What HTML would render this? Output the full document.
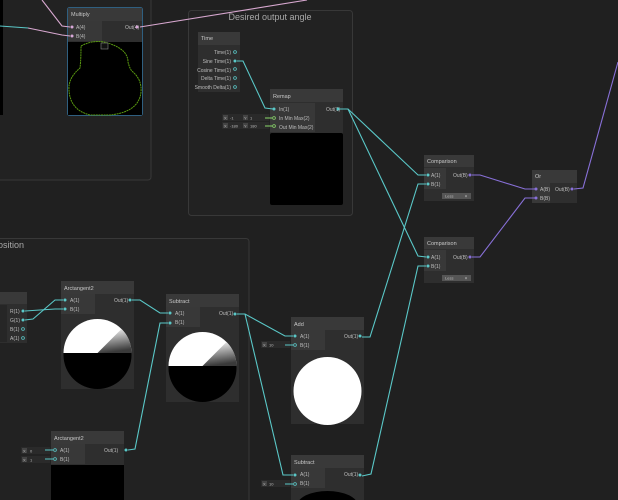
<!DOCTYPE html>
<html><head><meta charset="utf-8"><style>
html,body{margin:0;padding:0;background:#202020;width:618px;height:500px;overflow:hidden}
svg{display:block}
text{font-family:"Liberation Sans",sans-serif;font-size:5px;fill:#bdbdbd}
.h{font-size:5.5px;fill:#c8c8c8}
</style></head><body>
<svg width="618" height="500" viewBox="0 0 618 500" xmlns="http://www.w3.org/2000/svg">
<defs>
<linearGradient id="g1" x1="0" y1="0" x2="0.2" y2="1"><stop offset="0" stop-color="#fff"/><stop offset="1" stop-color="#3a3a3a"/></linearGradient>
</defs>
<rect width="618" height="500" fill="#202020"/>
<!-- groups -->
<rect x="-5" y="-5" width="156" height="185" rx="3" fill="#222" stroke="#383838"/>
<rect x="188.5" y="10.5" width="164" height="205" rx="3" fill="#222" stroke="#383838"/>
<text x="270" y="20" text-anchor="middle" style="font-size:9px;fill:#a8a8a8">Desired output angle</text>
<rect x="-5" y="238.5" width="254" height="270" rx="3" fill="#222" stroke="#383838"/>
<text x="-2" y="248" style="font-size:9px;fill:#a8a8a8">osition</text>

<!-- left strip -->
<rect x="0" y="0" width="3" height="115" fill="#000"/>

<!-- Multiply -->
<rect x="67.5" y="7.5" width="75" height="108" rx="2" fill="#2e2e2e" stroke="#2f5f80"/>
<rect x="68" y="8" width="74" height="13" fill="#393939"/>
<text x="71" y="16" class="h">Multiply</text>
<rect x="68" y="21" width="34" height="20" fill="#383838"/>
<text x="76" y="29">A(4)</text><text x="76" y="38">B(4)</text>
<text x="125" y="29">Out(4)</text>
<circle cx="72" cy="27" r="1.5" fill="#d8a8d8"/><circle cx="72" cy="36" r="1.5" fill="#d8a8d8"/><circle cx="137" cy="27" r="1.5" fill="#d8a8d8"/>
<rect x="68" y="42" width="74" height="73" fill="#000"/>
<path d="M81 46 Q92 40 104 42 Q128 48 128 62 Q130 70 133 72 Q142 80 141 92 Q139 112 110 115 L90 115 Q70 110 69 90 Q68 78 80 68 Q81 60 81 46Z" fill="none" stroke="#5a9a10" stroke-width="1" stroke-dasharray="2 0.6"/>
<rect x="101" y="43" width="7" height="6" fill="#111" stroke="#888" stroke-width="0.6"/>

<!-- Time -->
<rect x="198" y="32" width="42" height="60" fill="#2e2e2e"/>
<rect x="198" y="32" width="42" height="13" fill="#393939"/>
<text x="201" y="40" class="h">Time</text>
<g text-anchor="end"><text x="231" y="54">Time(1)</text><text x="231" y="63">Sine Time(1)</text><text x="231" y="72">Cosine Time(1)</text><text x="231" y="80">Delta Time(1)</text><text x="231" y="89">Smooth Delta(1)</text></g>
<g fill="none" stroke="#5ac8c8" stroke-width="0.8"><circle cx="235" cy="52" r="1.4"/><circle cx="235" cy="69" r="1.4"/><circle cx="235" cy="78" r="1.4"/><circle cx="235" cy="87" r="1.4"/></g>
<circle cx="235" cy="61" r="1.5" fill="#5ac8c8"/>

<!-- Remap -->
<rect x="270" y="89" width="73" height="116" rx="2" fill="#2e2e2e"/>
<rect x="270" y="89" width="73" height="13" fill="#393939"/>
<text x="273" y="98" class="h">Remap</text>
<rect x="270" y="103" width="45" height="29" fill="#383838"/>
<text x="279" y="111">In(1)</text><text x="279" y="120">In Min Max(2)</text><text x="279" y="129">Out Min Max(2)</text>
<text x="326" y="111">Out(1)</text>
<circle cx="274" cy="109" r="1.5" fill="#5ac8c8"/><circle cx="338" cy="109" r="1.5" fill="#5ac8c8"/>
<g fill="none" stroke="#8ad86a" stroke-width="0.8"><circle cx="274" cy="118" r="1.4"/><circle cx="274" cy="126" r="1.4"/></g>
<rect x="270" y="133" width="73" height="72" rx="2" fill="#000"/>
<g fill="#2a2a2a"><rect x="222" y="114" width="47" height="7"/><rect x="222" y="122" width="47" height="7"/></g>
<g fill="#444"><rect x="223" y="115" width="5" height="5"/><rect x="243" y="115" width="5" height="5"/><rect x="223" y="123" width="5" height="5"/><rect x="243" y="123" width="5" height="5"/></g>
<text x="224" y="119.5" style="font-size:4px">X</text><text x="230" y="119.5" style="font-size:4px">-1</text><text x="244" y="119.5" style="font-size:4px">Y</text><text x="250" y="119.5" style="font-size:4px">1</text>
<text x="224" y="127.5" style="font-size:4px">X</text><text x="230" y="127.5" style="font-size:4px">-180</text><text x="244" y="127.5" style="font-size:4px">Y</text><text x="250" y="127.5" style="font-size:4px">180</text>
<line x1="265" y1="118" x2="272" y2="118" stroke="#8ad86a"/><line x1="265" y1="126" x2="272" y2="126" stroke="#8ad86a"/>

<!-- Comparisons -->
<g id="c1">
<rect x="424" y="155" width="50" height="46" fill="#2e2e2e"/>
<rect x="424" y="155" width="50" height="12" fill="#393939"/>
<text x="427" y="163" class="h">Comparison</text>
<rect x="424" y="168" width="22" height="21" fill="#383838"/>
<text x="431" y="177">A(1)</text><text x="431" y="186">B(1)</text><text x="453" y="177">Out(B)</text>
<circle cx="428" cy="175" r="1.5" fill="#5ac8c8"/><circle cx="428" cy="184" r="1.5" fill="#5ac8c8"/><circle cx="470" cy="175" r="1.5" fill="#8870d8"/>
<rect x="442" y="193" width="29" height="6" fill="#555"/><text x="445" y="197.5" style="font-size:4px">Less</text><text x="465" y="197.5" style="font-size:4px">▾</text>
</g>
<use href="#c1" y="82"/>
<!-- Or -->
<rect x="532" y="170" width="45" height="33" fill="#2e2e2e"/>
<rect x="532" y="170" width="45" height="13" fill="#393939"/>
<text x="535" y="178" class="h">Or</text>
<rect x="532" y="183" width="18" height="20" fill="#383838"/>
<text x="540" y="191">A(B)</text><text x="540" y="200">B(B)</text><text x="555" y="191">Out(B)</text>
<circle cx="536" cy="189" r="1.5" fill="#8870d8"/><circle cx="536" cy="198" r="1.5" fill="#8870d8"/><circle cx="572" cy="189" r="1.5" fill="#8870d8"/>

<!-- Split-ish -->
<rect x="-2" y="292" width="29" height="51" fill="#2e2e2e"/>
<rect x="-2" y="292" width="29" height="12" fill="#393939"/>
<rect x="-2" y="305" width="9" height="37" fill="#262626"/>
<text x="10" y="313">R(1)</text><text x="10" y="322">G(1)</text><text x="10" y="331">B(1)</text><text x="10" y="340">A(1)</text>
<circle cx="23" cy="311" r="1.5" fill="#5ac8c8"/><circle cx="23" cy="320" r="1.5" fill="#5ac8c8"/>
<g fill="none" stroke="#5ac8c8" stroke-width="0.8"><circle cx="23" cy="329" r="1.4"/><circle cx="23" cy="338" r="1.4"/></g>

<!-- Arctan2 #1 -->
<rect x="61" y="281" width="73" height="108" fill="#2e2e2e"/>
<rect x="61" y="281" width="73" height="13" fill="#393939"/>
<text x="64" y="290" class="h">Arctangent2</text>
<rect x="61" y="294" width="34" height="20" fill="#383838"/>
<text x="70" y="302">A(1)</text><text x="70" y="311">B(1)</text><text x="114" y="302">Out(1)</text>
<circle cx="65" cy="300" r="1.5" fill="#5ac8c8"/><circle cx="65" cy="309" r="1.5" fill="#5ac8c8"/><circle cx="130" cy="300" r="1.5" fill="#5ac8c8"/>
<circle cx="97.5" cy="355" r="34" fill="#000"/>
<path d="M63.5 353 A34 34 0 0 1 131.5 353 Z" fill="#fff"/>
<path d="M97.5 353 L121.5 329 A34 34 0 0 1 131.5 353 Z" fill="url(#g1)"/>

<!-- Subtract -->
<rect x="166" y="294" width="73" height="108" fill="#2e2e2e"/>
<rect x="166" y="294" width="73" height="13" fill="#393939"/>
<text x="169" y="303" class="h">Subtract</text>
<rect x="166" y="307" width="34" height="20" fill="#383838"/>
<text x="175" y="315">A(1)</text><text x="175" y="324">B(1)</text><text x="219" y="315">Out(1)</text>
<circle cx="170" cy="313" r="1.5" fill="#5ac8c8"/><circle cx="170" cy="323" r="1.5" fill="#5ac8c8"/><circle cx="235" cy="314" r="1.5" fill="#5ac8c8"/>
<circle cx="202.5" cy="368" r="34" fill="#000"/>
<path d="M168.5 366 A34 34 0 0 1 236.5 366 Z" fill="#fff"/>
<path d="M202.5 366 L226.5 342 A34 34 0 0 1 236.5 366 Z" fill="url(#g1)"/>

<!-- Add -->
<rect x="291" y="317" width="73" height="107" fill="#2e2e2e"/>
<rect x="291" y="317" width="73" height="13" fill="#393939"/>
<text x="294" y="326" class="h">Add</text>
<rect x="291" y="330" width="34" height="20" fill="#383838"/>
<text x="300" y="338">A(1)</text><text x="300" y="347">B(1)</text><text x="344" y="338">Out(1)</text>
<circle cx="295" cy="336" r="1.5" fill="#5ac8c8"/><circle cx="360" cy="336" r="1.5" fill="#5ac8c8"/>
<circle cx="295" cy="345" r="1.4" fill="none" stroke="#5ac8c8" stroke-width="0.8"/>
<circle cx="327.5" cy="391" r="34" fill="#fff"/>
<rect x="261" y="341" width="29" height="7" fill="#2a2a2a"/><rect x="262" y="342" width="5" height="5" fill="#444"/>
<text x="263" y="346.5" style="font-size:4px">X</text><text x="269" y="346.5" style="font-size:4px">10</text>
<line x1="285" y1="345" x2="293" y2="345" stroke="#5ac8c8"/>

<!-- Subtract 2 -->
<rect x="291" y="455" width="73" height="50" fill="#2e2e2e"/>
<rect x="291" y="455" width="73" height="13" fill="#393939"/>
<text x="294" y="464" class="h">Subtract</text>
<rect x="291" y="468" width="34" height="20" fill="#383838"/>
<text x="300" y="476">A(1)</text><text x="300" y="485">B(1)</text><text x="344" y="476">Out(1)</text>
<circle cx="295" cy="475" r="1.5" fill="#5ac8c8"/><circle cx="360" cy="475" r="1.5" fill="#5ac8c8"/>
<circle cx="295" cy="484" r="1.4" fill="none" stroke="#5ac8c8" stroke-width="0.8"/>
<rect x="291" y="489" width="73" height="11" fill="#2e2e2e"/>
<ellipse cx="327.5" cy="505" rx="30" ry="14" fill="#000"/>
<rect x="261" y="480" width="29" height="7" fill="#2a2a2a"/><rect x="262" y="481" width="5" height="5" fill="#444"/>
<text x="263" y="485.5" style="font-size:4px">X</text><text x="269" y="485.5" style="font-size:4px">10</text>
<line x1="285" y1="484" x2="293" y2="484" stroke="#5ac8c8"/>

<!-- Arctan2 #2 -->
<rect x="51" y="431" width="73" height="70" fill="#2e2e2e"/>
<rect x="51" y="431" width="73" height="13" fill="#393939"/>
<text x="54" y="440" class="h">Arctangent2</text>
<rect x="51" y="444" width="34" height="20" fill="#383838"/>
<text x="60" y="452">A(1)</text><text x="60" y="461">B(1)</text><text x="104" y="452">Out(1)</text>
<circle cx="126" cy="450" r="1.5" fill="#5ac8c8"/>
<g fill="none" stroke="#5ac8c8" stroke-width="0.8"><circle cx="55" cy="450" r="1.4"/><circle cx="55" cy="459" r="1.4"/></g>
<rect x="51" y="465" width="73" height="36" fill="#000"/>
<g fill="#2a2a2a"><rect x="21" y="447" width="29" height="7"/><rect x="21" y="456" width="29" height="7"/></g>
<g fill="#444"><rect x="22" y="448" width="5" height="5"/><rect x="22" y="457" width="5" height="5"/></g>
<text x="23" y="452.5" style="font-size:4px">X</text><text x="30" y="452.5" style="font-size:4px">0</text>
<text x="23" y="461.5" style="font-size:4px">X</text><text x="30" y="461.5" style="font-size:4px">1</text>
<line x1="45" y1="450" x2="53" y2="450" stroke="#5ac8c8"/><line x1="45" y1="459" x2="53" y2="459" stroke="#5ac8c8"/>

<!-- wires -->
<g fill="none" stroke-width="1.1">
<path d="M42 0 L62 26 L70 27" stroke="#d8a8d0"/>
<path d="M0 26 L28 28" stroke="#5ac8c8"/>
<path d="M28 28 L62 35 L70 36" stroke="#d8a8d0"/>
<path d="M140 27 L307 0" stroke="#d8a8d0"/>
<path d="M237 61 L243 61 L265 108 L273 109" stroke="#5ac8c8"/>
<path d="M340 109 L348 109 L418 175 L426 175" stroke="#5ac8c8"/>
<path d="M348 109 L418 256 L426 257" stroke="#5ac8c8"/>
<path d="M362 337 L370 337 L418 184 L426 184" stroke="#5ac8c8"/>
<path d="M362 476 L371 474 L418 266 L426 266" stroke="#5ac8c8"/>
<path d="M472 175 L480 175 L525 189 L535 189" stroke="#8870d8"/>
<path d="M472 257 L480 257 L525 198 L535 198" stroke="#8870d8"/>
<path d="M574 189 L583 188 L618 62" stroke="#8870d8"/>
<path d="M25 311 L55 309 L63 309" stroke="#5ac8c8"/>
<path d="M25 320 L33 319 L55 300 L63 300" stroke="#5ac8c8"/>
<path d="M132 300 L140 300 L160 313 L168 313" stroke="#5ac8c8"/>
<path d="M128 450 L135 449 L160 323 L168 323" stroke="#5ac8c8"/>
<path d="M237 314 L245 314 L285 336 L293 336" stroke="#5ac8c8"/>
<path d="M245 314 L283 475 L293 475" stroke="#5ac8c8"/>
</g>
</svg>
</body></html>
